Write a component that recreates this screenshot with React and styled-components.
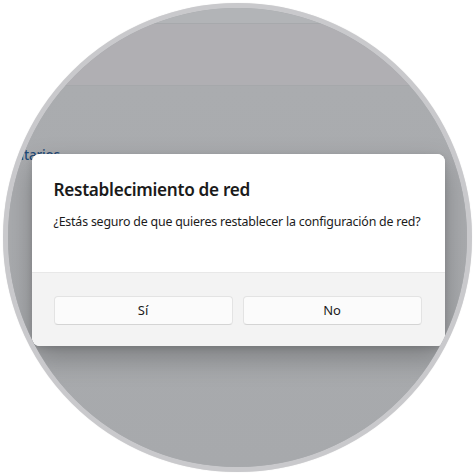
import React from "react";
import styled, { createGlobalStyle } from "styled-components";

const Global = createGlobalStyle`
  html, body { margin: 0; padding: 0; background: #ffffff; }
  body { width: 474px; height: 474px; overflow: hidden; font-family: "Noto Sans", "Open Sans", sans-serif; }
`;

const Page = styled.div`
  width: 474px;
  height: 474px;
  display: flex;
  align-items: center;
  justify-content: center;
  background: #ffffff;
`;

const Lens = styled.div`
  position: relative;
  box-sizing: border-box;
  width: 469px;
  height: 469px;
  border-radius: 50%;
  border: 5px solid #c9c9cc;
  overflow: hidden;
  background: #a9abae;
  box-shadow: 0 0 1px rgba(0,0,0,0.15);
`;

const Screen = styled.div`
  display: flex;
  flex-direction: column;
  height: 100%;
`;

const TopStrip = styled.div`
  height: 15px;
  background: #b2b4b7;
  border-bottom: 1px solid #a7a9ac;
`;

const Band = styled.div`
  height: 61px;
  background: #b0afb3;
  border-bottom: 1px solid #a6a8ab;
`;

const Content = styled.div`
  flex: 1;
  background: linear-gradient(#aaacaf, #a7a9ac);
  padding: 57px 0 0 13px;
`;

const LinkText = styled.span`
  font-family: "Noto Sans", sans-serif;
  font-size: 13.5px;
  font-weight: 500;
  color: #1f4a78;
  letter-spacing: -0.2px;
`;

const Dialog = styled.div`
  position: absolute;
  left: 24px;
  top: 146px;
  width: 413px;
  height: 192px;
  border-radius: 8px;
  overflow: hidden;
  display: flex;
  flex-direction: column;
  background: #ffffff;
  box-shadow: 0 12px 28px rgba(0, 0, 0, 0.26), 0 2px 6px rgba(0, 0, 0, 0.12);
`;

const Body = styled.div`
  height: 119px;
  box-sizing: border-box;
  padding: 24px 22px 0 22px;
  background: #ffffff;
  border-bottom: 1px solid #e8e8e8;
  color: #1b1b1b;
`;

const Title = styled.h2`
  margin: 0;
  font-family: "Noto Sans", sans-serif;
  font-size: 17.2px;
  font-weight: 600;
  line-height: 24px;
  letter-spacing: -0.3px;
  white-space: nowrap;
`;

const Message = styled.p`
  margin: 11px 0 0 0;
  font-family: "Noto Sans", sans-serif;
  font-size: 12.4px;
  line-height: 18px;
  letter-spacing: -0.2px;
  white-space: nowrap;
`;

const Footer = styled.div`
  flex: 1;
  background: #f3f3f3;
  padding: 23px 23px 0 22px;
  display: grid;
  grid-template-columns: 1fr 1fr;
  column-gap: 10px;
  align-content: start;
`;

const Button = styled.button`
  height: 29px;
  box-sizing: border-box;
  border: 1px solid #e3e3e3;
  border-bottom-color: #d4d4d4;
  border-radius: 4px;
  background: #fbfbfb;
  font-family: "Noto Sans", sans-serif;
  font-size: 13px;
  color: #1b1b1b;
  padding: 0;
  cursor: pointer;
`;

export default function App() {
  return (
    <>
      <Global />
      <Page>
        <Lens>
          <Screen>
            <TopStrip />
            <Band />
            <Content>
              <LinkText>itarios</LinkText>
            </Content>
          </Screen>
          <Dialog role="dialog">
            <Body>
              <Title>Restablecimiento de red</Title>
              <Message>¿Estás seguro de que quieres restablecer la configuración de red?</Message>
            </Body>
            <Footer>
              <Button>Sí</Button>
              <Button>No</Button>
            </Footer>
          </Dialog>
        </Lens>
      </Page>
    </>
  );
}
